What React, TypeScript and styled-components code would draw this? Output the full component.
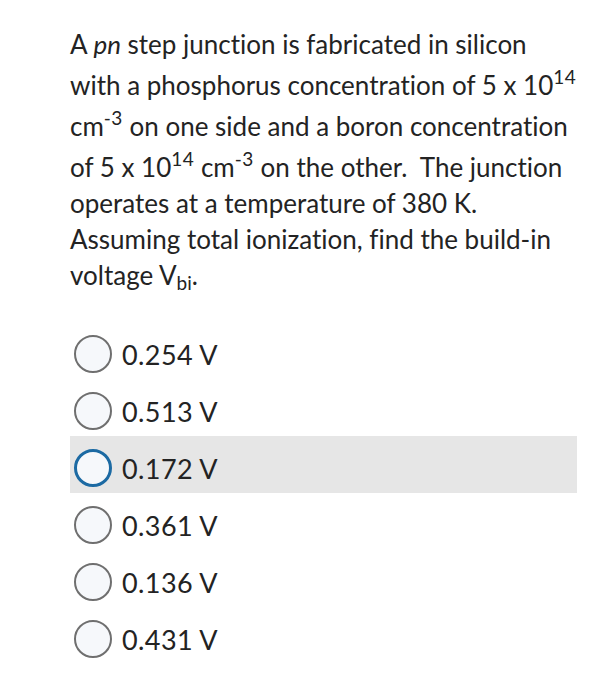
import React, { useState } from 'react';
import styled, { createGlobalStyle } from 'styled-components';

const GlobalStyle = createGlobalStyle`
  html, body {
    margin: 0;
    padding: 0;
    background: #ffffff;
  }
  body {
    font-family: Lato, "Open Sans", "Liberation Sans", sans-serif;
    font-variant-ligatures: none;
    color: #232323;
  }
`;

const Page = styled.div`
  padding: 26px 0 40px 70px;
  width: 507px;
`;

const Question = styled.p`
  margin: 0;
  font-size: 26px;
  line-height: 36px;
  white-space: nowrap;

  sup {
    font-size: 19px;
    line-height: 30px;
    vertical-align: 11px;
    letter-spacing: 0.5px;
  }

  sub {
    font-size: 19px;
    line-height: 0;
    vertical-align: -5px;
  }
`;

const Options = styled.div`
  margin-top: 29px;
  display: flex;
  flex-direction: column;
`;

const Option = styled.label<{ $active: boolean }>`
  height: 57px;
  box-sizing: border-box;
  padding: 13px 0 0 4px;
  display: flex;
  align-items: flex-start;
  gap: 10px;
  background: ${(p) => (p.$active ? '#e6e6e6' : 'transparent')};
  cursor: pointer;
`;

const Radio = styled.span<{ $active: boolean }>`
  width: 38px;
  height: 38px;
  box-sizing: border-box;
  border-radius: 50%;
  flex-shrink: 0;
  background: #f6f8fb;
  border: ${(p) => (p.$active ? '3px solid #1c6aa3' : '2px solid #6f6f6f')};
`;

const OptionText = styled.span`
  font-size: 27px;
  letter-spacing: 0.4px;
  line-height: 40px;
`;

const answers = ['0.254 V', '0.513 V', '0.172 V', '0.361 V', '0.136 V', '0.431 V'];

const App: React.FC = () => {
  const [hovered] = useState(2);

  return (
    <>
      <GlobalStyle />
      <Page>
        <Question>
          A <em>pn</em> step junction is fabricated in silicon
          <br />
          with a phosphorus concentration of 5 x 10<sup>14</sup>
          <br />
          cm<sup>-3</sup> on one side and a boron concentration
          <br />
          of 5 x 10<sup>14</sup> cm<sup>-3</sup> on the other.&nbsp; The junction
          <br />
          operates at a temperature of 380 K.
          <br />
          Assuming total ionization, find the build-in
          <br />
          voltage V<sub>bi</sub>.
        </Question>

        <Options>
          {answers.map((a, i) => (
            <Option key={a} $active={i === hovered}>
              <Radio $active={i === hovered} />
              <OptionText>{a}</OptionText>
            </Option>
          ))}
        </Options>
      </Page>
    </>
  );
};

export default App;
